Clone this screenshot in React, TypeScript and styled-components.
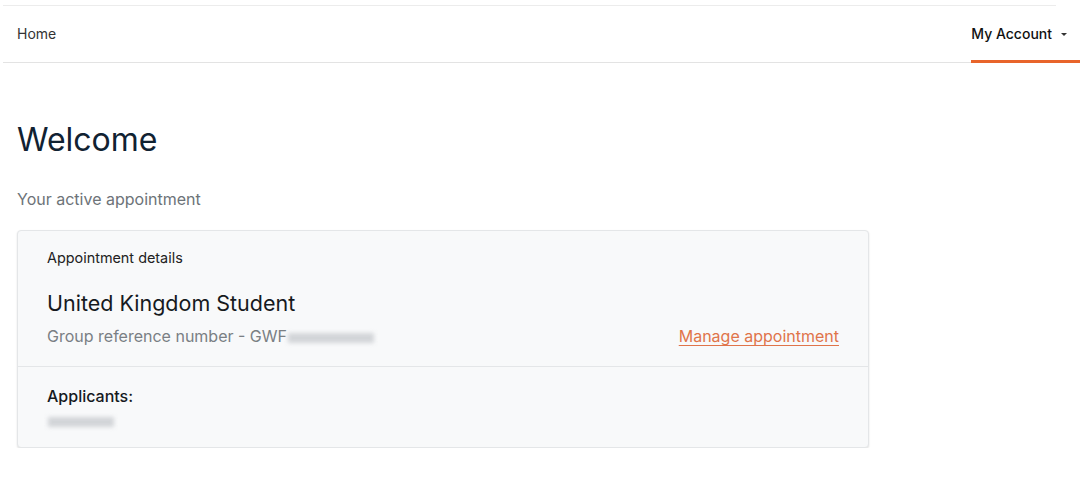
import React from "react";
import styled, { createGlobalStyle } from "styled-components";

const GlobalStyle = createGlobalStyle`
  html, body {
    margin: 0;
    padding: 0;
    background: #ffffff;
    font-family: Inter, "Noto Sans", Arial, sans-serif;
    color: #1f2328;
  }
`;

const Page = styled.div`
  width: 1080px;
  padding-top: 5px;
`;

const TopRule = styled.div`
  margin-left: 3px;
  width: 1053px;
  height: 1px;
  background: #ececec;
`;

const NavBar = styled.nav`
  display: flex;
  align-items: stretch;
  justify-content: space-between;
  height: 56px;
  margin-left: 3px;
  border-bottom: 1px solid #e3e3e3;
`;

const NavItem = styled.a<{ $active?: boolean }>`
  display: flex;
  align-items: center;
  gap: 9px;
  padding: 1px ${(p) => (p.$active ? "13px 0 0" : "14px 0 14px")};
  font-size: 14px;
  font-weight: ${(p) => (p.$active ? 500 : 400)};
  color: ${(p) => (p.$active ? "#111" : "#333")};
  text-decoration: none;
  border-bottom: 3px solid ${(p) => (p.$active ? "#e8642a" : "transparent")};
  margin-bottom: -1px;
`;

const Caret = styled.span`
  width: 0;
  height: 0;
  border-left: 3px solid transparent;
  border-right: 3px solid transparent;
  border-top: 3px solid #333;
  margin-top: 1px;
`;

const Main = styled.main`
  padding: 57px 17px 0;
`;

const Title = styled.h1`
  margin: 0;
  font-size: 32px;
  font-weight: 400;
  line-height: 40px;
  color: #112232;
`;

const Subtitle = styled.p`
  margin: 29px 0 0;
  font-size: 16px;
  line-height: 20px;
  color: #6d7378;
`;

const Card = styled.section`
  margin-top: 21px;
  width: 850px;
  background: #f8f9fa;
  border: 1px solid #e4e6e8;
  border-radius: 4px;
  box-shadow: 0 1px 2px rgba(0, 0, 0, 0.12);
`;

const CardSection = styled.div<{ $divided?: boolean }>`
  padding: ${(p) => (p.$divided ? "18px 29px 18px" : "18px 29px 19px")};
  border-top: ${(p) => (p.$divided ? "1px solid #e4e6e8" : "none")};
`;

const Label = styled.div`
  font-size: 14.4px;
  line-height: 18px;
  color: #222;
`;

const CardTitle = styled.h2`
  margin: 23px 0 0;
  font-size: 21.5px;
  font-weight: 400;
  line-height: 26px;
  color: #161a1e;
`;

const RefRow = styled.div`
  display: flex;
  justify-content: space-between;
  align-items: center;
  margin-top: 9px;
`;

const RefText = styled.span`
  font-size: 16px;
  line-height: 22px;
  color: #7a7f84;
`;

const Blurred = styled.span<{ $w: number }>`
  display: inline-block;
  width: ${(p) => p.$w}px;
  height: 10px;
  margin-left: 1px;
  vertical-align: middle;
  background: #c9ccd0;
  filter: blur(2px);
  opacity: 0.8;
`;

const ManageLink = styled.a`
  font-size: 16px;
  line-height: 22px;
  color: #e0744a;
  text-decoration: underline;
  text-underline-offset: 3px;
`;

const ApplicantsLabel = styled.div`
  font-size: 16px;
  font-weight: 500;
  line-height: 22px;
  color: #161a1e;
`;

const ApplicantName = styled.div`
  margin-top: 8px;
  height: 14px;
  display: flex;
  align-items: center;
`;

export default function App() {
  return (
    <Page>
      <GlobalStyle />
      <TopRule />
      <NavBar>
        <NavItem href="#">Home</NavItem>
        <NavItem href="#" $active>
          My Account <Caret />
        </NavItem>
      </NavBar>
      <Main>
        <Title>Welcome</Title>
        <Subtitle>Your active appointment</Subtitle>
        <Card>
          <CardSection>
            <Label>Appointment details</Label>
            <CardTitle>United Kingdom Student</CardTitle>
            <RefRow>
              <RefText>
                Group reference number - GWF<Blurred $w={86} />
              </RefText>
              <ManageLink href="#">Manage appointment</ManageLink>
            </RefRow>
          </CardSection>
          <CardSection $divided>
            <ApplicantsLabel>Applicants:</ApplicantsLabel>
            <ApplicantName>
              <Blurred $w={66} />
            </ApplicantName>
          </CardSection>
        </Card>
      </Main>
    </Page>
  );
}
